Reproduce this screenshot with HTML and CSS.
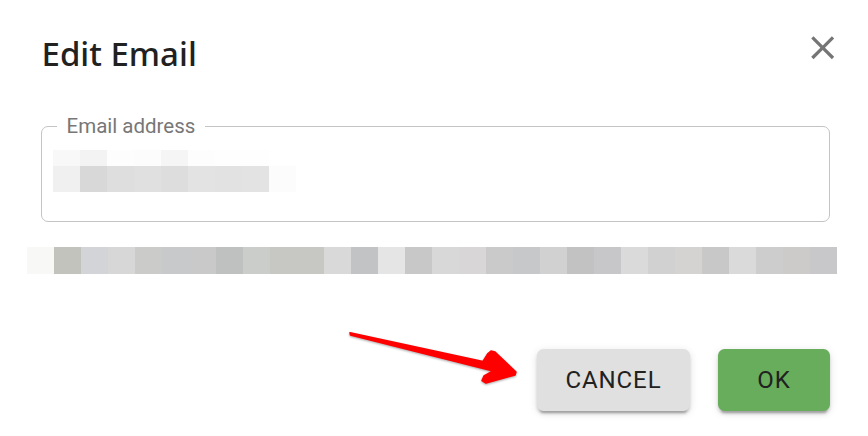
FILE: index.html
```html
<!DOCTYPE html>
<html lang="en">
<head>
<meta charset="utf-8">
<title>Edit Email</title>
<link rel="stylesheet" href="styles.css">
</head>
<body>
<div class="dialog">
  <div class="header">
    <h1 class="title">Edit Email</h1>
    <button class="close" aria-label="Close">
      <svg viewBox="0 0 24 24" width="39.4" height="39.4"><path fill="currentColor" d="M19 6.41L17.59 5 12 10.59 6.41 5 5 6.41 10.59 12 5 17.59 6.41 19 12 13.41 17.59 19 19 17.59 13.41 12z"/></svg>
    </button>
  </div>
  <fieldset class="field">
    <legend class="field-label">Email address</legend>
    <div class="blur-email">
      <span style="background:#f8f8f8"></span><span style="background:#f3f3f3"></span><span style="background:#fdfdfd"></span><span style="background:#fcfcfc"></span><span style="background:#f5f5f5"></span><span style="background:#fdfdfd"></span><span style="background:#fefefe"></span><span style="background:#fefefe"></span><span style="background:#fff"></span>
      <span style="background:#f0f0f0"></span><span style="background:#d8d8d8"></span><span style="background:#dedede"></span><span style="background:#e0e0e0"></span><span style="background:#dddddd"></span><span style="background:#e3e3e3"></span><span style="background:#e2e2e2"></span><span style="background:#e3e3e3"></span><span style="background:#fcfcfc"></span>
    </div>
  </fieldset>
  <div class="blur-bar">
    <span style="background:#f8f8f6"></span><span style="background:#c2c3bd"></span><span style="background:#d3d4d8"></span><span style="background:#d7d7d7"></span><span style="background:#cbcbc9"></span><span style="background:#c8c9cb"></span><span style="background:#c9c9c9"></span><span style="background:#bfc1c0"></span><span style="background:#cbcdca"></span><span style="background:#c7c8c4"></span><span style="background:#c7c8c4"></span><span style="background:#d9d9d9"></span><span style="background:#c2c3c5"></span><span style="background:#e5e5e5"></span><span style="background:#c8c8c8"></span><span style="background:#d8d8d8"></span><span style="background:#d8d6d7"></span><span style="background:#cacaca"></span><span style="background:#c7c8ca"></span><span style="background:#d1d1d1"></span><span style="background:#c2c2c2"></span><span style="background:#c7c7c9"></span><span style="background:#dadada"></span><span style="background:#d1d1d1"></span><span style="background:#d4d3d1"></span><span style="background:#c8c8c8"></span><span style="background:#dadada"></span><span style="background:#cdcdcd"></span><span style="background:#cccbc9"></span><span style="background:#c8c8ca"></span>
  </div>
  <div class="actions">
    <button class="btn btn-cancel">CANCEL</button>
    <button class="btn btn-ok">OK</button>
  </div>
  <svg class="arrow" viewBox="0 0 190 70" width="190" height="70">
    <polygon points="10,12.8 143,41.5 148,33.5 151,31 155,32 176,52 175,55 146,63 142,60.5 144,56 153,51 10.5,15" fill="#ff0000" stroke="#ff0000" stroke-width="1.5" stroke-linejoin="round"/>
  </svg>
</div>
</body>
</html>
```

FILE: styles.css
```css
html, body {
  margin: 0;
  padding: 0;
  background: #ffffff;
}

.dialog {
  position: relative;
  width: 868px;
  height: 436px;
  box-sizing: border-box;
  padding: 31px 38px 0 41px;
  font-family: Roboto, "Liberation Sans", sans-serif;
}

.header {
  display: flex;
  justify-content: space-between;
  align-items: flex-start;
  height: 45px;
}

.title {
  margin: 0 0 0 0.5px;
  font-family: "Noto Sans", "Open Sans", sans-serif;
  font-size: 33px;
  line-height: 45px;
  font-weight: 500;
  color: #212121;
}

.close {
  margin: -3.2px -12.7px 0 0;
  padding: 0;
  border: 0;
  background: transparent;
  color: #757575;
  width: 39.4px;
  height: 39.4px;
  display: block;
}

.close svg {
  display: block;
}

.field {
  margin: 38px 0 0 0;
  padding: 12px 0 29px 11px;
  border: 1px solid #c4c4c4;
  border-radius: 7px;
  min-width: 0;
}

.field-label {
  margin-left: 3.5px;
  padding: 0 10px;
  font-size: 20.5px;
  line-height: 24px;
  color: #777777;
}

.blur-email {
  display: grid;
  grid-template-columns: repeat(9, 27px);
  grid-template-rows: 16px 26px;
}

.blur-bar {
  display: grid;
  grid-template-columns: repeat(30, 27px);
  height: 27px;
  margin: 24.5px 0 0 -14px;
}

.actions {
  display: flex;
  justify-content: flex-end;
  gap: 28px;
  margin-top: 75px;
}

.btn {
  height: 62px;
  border: 0;
  border-radius: 6.5px;
  font-family: Roboto, "Liberation Sans", sans-serif;
  font-size: 24px;
  font-weight: 400;
  letter-spacing: 0.9px;
  color: #212121;
  padding: 0;
  box-shadow: 0 5px 2px -3px rgba(0,0,0,0.2), 0 3px 3px 0 rgba(0,0,0,0.14), 0 2px 8px 0 rgba(0,0,0,0.12);
}

.btn-cancel {
  width: 153px;
  background: #e0e0e0;
}

.btn-ok {
  width: 112px;
  background: #67ad5c;
}

.arrow {
  position: absolute;
  left: 340px;
  top: 320px;
  filter: drop-shadow(0.5px 1px 0.8px rgba(0,0,0,0.35));
}
```
